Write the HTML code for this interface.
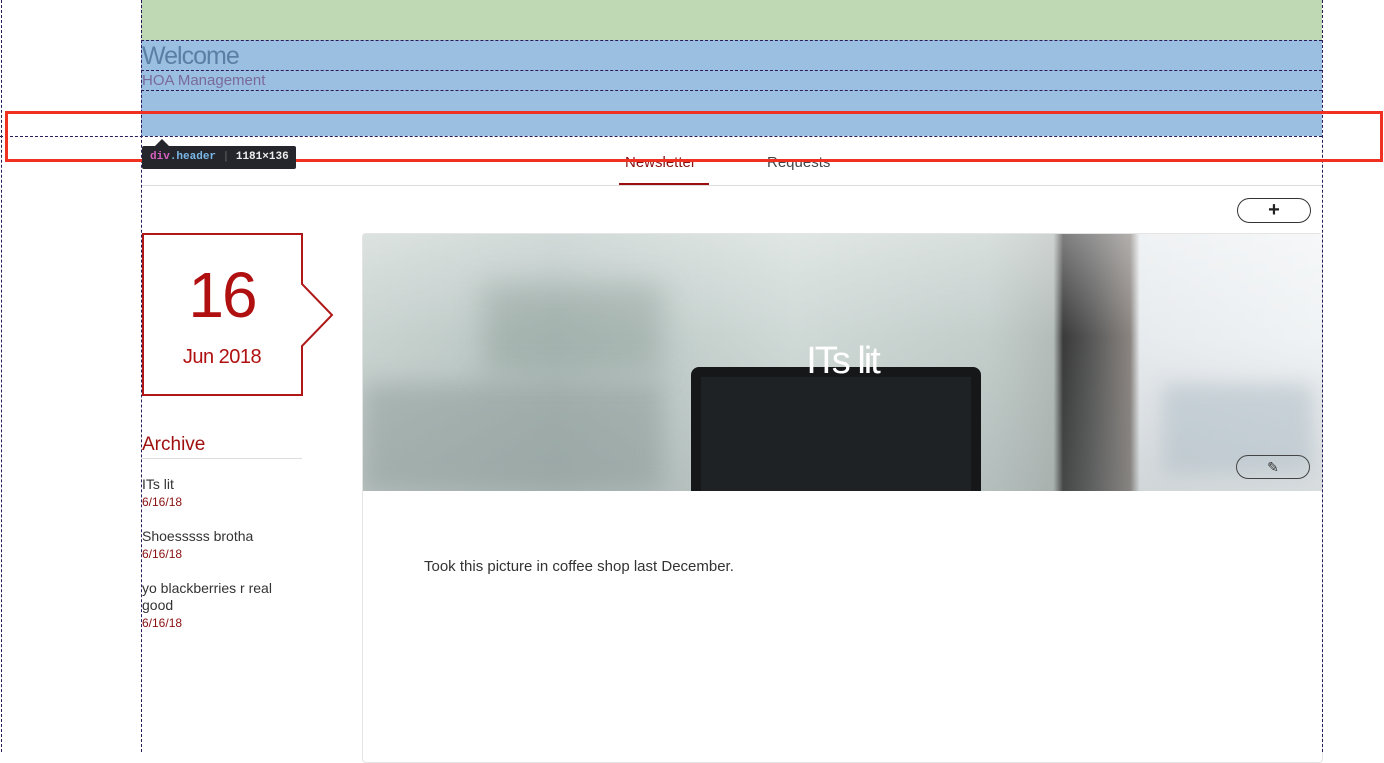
<!DOCTYPE html>
<html><head><style>
*{margin:0;padding:0;box-sizing:border-box}
body{width:1384px;height:752px;overflow:hidden;background:#fff;font-family:"Liberation Sans",sans-serif;position:relative}
.a{position:absolute}
.vd{position:absolute;top:0;height:752px;border-left:1px dashed #2a1a5a;z-index:5}
.hd{position:absolute;left:141px;width:1181px;border-top:1px dashed #2a1a5a}
</style></head><body>
<div class="a" style="left:141px;top:0;width:1181px;height:40px;background:#bfd9b4"></div>
<div class="a" style="left:141px;top:40px;width:1181px;height:96px;background:#9bbfe0"></div>
<div class="hd" style="top:40px"></div><div class="hd" style="top:70px"></div><div class="hd" style="top:90px"></div><div class="a" style="left:0;top:136px;width:1322px;border-top:1px dashed #2a1a5a"></div>
<div class="vd" style="left:1px"></div><div class="vd" style="left:141px"></div><div class="vd" style="left:1322px"></div>
<div class="a" style="left:142px;top:42px;font-size:25px;color:#5a7fa4;letter-spacing:-1px">Welcome</div>
<div class="a" style="left:142px;top:72px;font-size:15px;color:#7a6a9a">HOA Management</div>
<div class="a" style="left:5px;top:111px;width:1378px;height:51px;border:3px solid #f03020;z-index:6"></div>
<div class="a" style="left:155px;top:139px;width:0;height:0;border:7px solid transparent;border-bottom-color:#25262b;border-top:0"></div>
<div class="a" style="left:142px;top:146px;width:154px;height:23px;background:#25262b;border-radius:2px;font-family:'Liberation Mono',monospace;font-size:11px;line-height:23px;color:#eee;padding-left:8px;z-index:7"><span style="color:#d860c0;font-weight:bold">div</span><span style="color:#7ab8e8;font-weight:bold">.header</span> <span style="color:#666">|</span> <b>1181×136</b></div>
<div class="a" style="left:625px;top:154px;font-size:15px;color:#8a1010">Newsletter</div>
<div class="a" style="left:767px;top:154px;font-size:15px;color:#444">Requests</div>
<div class="a" style="left:142px;top:185px;width:1180px;border-top:1px solid #ddd"></div>
<div class="a" style="left:619px;top:183px;width:90px;height:2px;background:#9a1010"></div>
<div class="a" style="left:1237px;top:198px;width:74px;height:25px;border:1px solid #333;border-radius:13px;text-align:center;font-size:20px;line-height:22px;color:#222;font-weight:bold">+</div>
<svg class="a" style="left:141px;top:233px" width="194" height="164"><path d="M2 1H161V51L191 82L161 113V162H2Z" fill="#fff" stroke="#b01818" stroke-width="2"/></svg>
<div class="a" style="left:142px;top:258px;width:160px;text-align:center;font-size:64px;color:#b01010;letter-spacing:-2px">16</div>
<div class="a" style="left:142px;top:346px;width:160px;text-align:center;font-size:20px;color:#b01010;letter-spacing:-0.5px">Jun 2018</div>
<div class="a" style="left:142px;top:434px;font-size:19px;color:#a01010">Archive</div>
<div class="a" style="left:142px;top:458px;width:160px;border-top:1px solid #ddd"></div>
<div class="a" style="left:142px;top:476px;font-size:14px;color:#333;line-height:17px;width:140px">ITs lit<br><span style="font-size:12px;color:#8a1010">6/16/18</span></div>
<div class="a" style="left:142px;top:528px;font-size:14px;color:#333;line-height:17px;width:140px">Shoesssss brotha<br><span style="font-size:12px;color:#8a1010">6/16/18</span></div>
<div class="a" style="left:142px;top:580px;font-size:14px;color:#333;line-height:17px;width:140px">yo blackberries r real good<br><span style="font-size:12px;color:#8a1010">6/16/18</span></div>
<div class="a" style="left:362px;top:233px;width:961px;height:530px;border:1px solid #e4e4e4;border-radius:4px"></div>
<div class="a" style="left:363px;top:234px;width:959px;height:257px;overflow:hidden;background:linear-gradient(90deg,#c9d3d0 0%,#b9c6c3 20%,#cfd9d6 45%,#c3cecb 65%,#b4bcb9 72%,#3a3a3a 73%,#585858 76%,#8a8480 80%,#e7ebee 81%,#f0f3f5 100%)">
<div class="a" style="left:0;top:0;width:959px;height:257px;background:linear-gradient(180deg,rgba(255,255,255,0.35),rgba(255,255,255,0) 40%,rgba(120,130,130,0.2) 100%)"></div>
<div class="a" style="left:0;top:150px;width:300px;height:107px;background:rgba(120,135,135,0.35);filter:blur(12px)"></div>
<div class="a" style="left:120px;top:50px;width:180px;height:90px;background:rgba(100,120,110,0.25);filter:blur(14px)"></div>
<div class="a" style="left:800px;top:150px;width:150px;height:90px;background:rgba(170,185,195,0.5);filter:blur(10px)"></div>
<div class="a" style="left:328px;top:133px;width:290px;height:130px;background:#151718;border-radius:8px 8px 0 0"></div>
<div class="a" style="left:338px;top:143px;width:270px;height:120px;background:#1e2224"></div>
<div class="a" style="left:0;top:106px;width:959px;text-align:center;font-size:38px;color:#fff;letter-spacing:-2px">ITs lit</div>
<div class="a" style="left:873px;top:221px;width:74px;height:24px;border:1px solid #444;border-radius:12px;text-align:center;font-size:14px;line-height:22px;color:#333">✎</div>
</div>
<div class="a" style="left:424px;top:558px;font-size:15px;color:#333">Took this picture in coffee shop last December.</div>
</body></html>
